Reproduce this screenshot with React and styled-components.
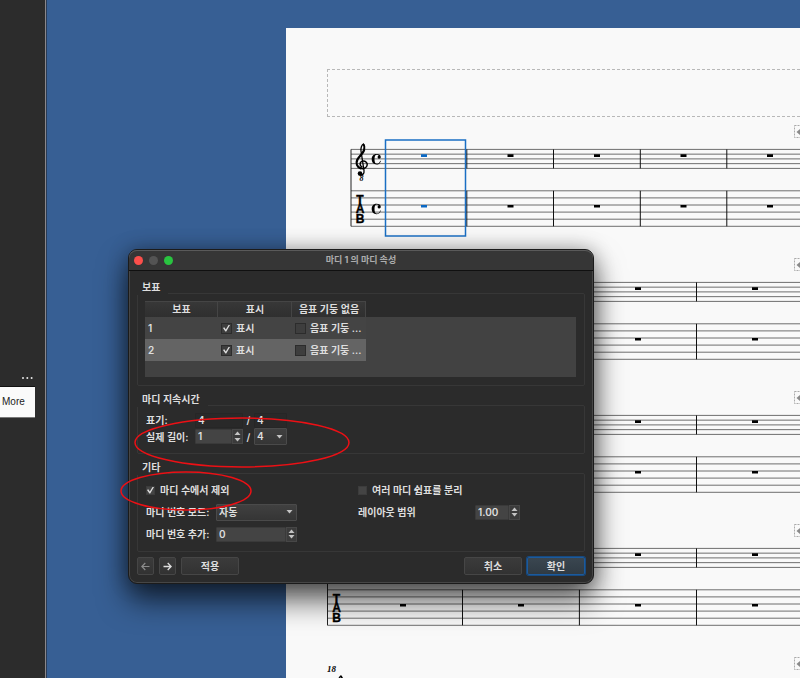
import { useState } from 'react'
import styled, { createGlobalStyle, css } from 'styled-components'

const GlobalStyle = createGlobalStyle`
    *{
        box-sizing: border-box;
    }
    body{
        margin: 0;
        background: #375f94;
        font-family: Inter, "Noto Sans CJK KR", sans-serif;
        font-size: 10px;
        line-height: 16px;
    }
    button, input, select{
        font: inherit;
        color: inherit;
        margin: 0;
    }
`

const Shell = styled.div`
    display: flex;
    height: 100vh;
    overflow: hidden;
`

const Sidebar = styled.aside`
    flex: 0 0 47px;
    padding-top: 370px;
    background: #2c2c2c;
    border-right: 1px solid #2a3c55;
    box-shadow: inset -1px 0 #8b878a;
`

const MoreButton = styled.button`
    position: relative;
    display: block;
    width: 35px;
    height: 16px;
    padding: 0;
    border: 0;
    background: none;
    svg{
        display: block;
        margin-left: 21px;
    }
`

const Tooltip = styled.span`
    position: absolute;
    top: 16px;
    left: 0;
    width: 35px;
    padding: 7px 2px;
    border-top: 1px solid #111;
    border-bottom: 1px solid #777;
    background: #fafafa;
    color: #222;
    font-family: "Liberation Sans", sans-serif;
    text-align: left;
`

const Canvas = styled.main`
    position: relative;
    flex: 1;
    display: flex;
    min-width: 0;
    background: #375f94;
`

const Page = styled.div`
    flex: 1;
    min-width: 0;
    margin: 28px 0 0 239px;
    padding: 41px 0 0 41px;
    background: #f9f9f9;
    overflow: hidden;
`

const TitleFrame = styled.div`
    height: 48px;
    margin-bottom: 7px;
    border: 1px dashed #b8b8b8;
    border-right: 0;
`

const SystemSvg = styled.svg`
    display: block;
    width: 100%;
    height: 133px;
    .tab{
        font: bold 12px "Liberation Sans", sans-serif;
    }
    .number{
        font: italic bold 9px "Liberation Serif", serif;
    }
    .eight{
        font: italic bold 8px "Liberation Serif", serif;
    }
`

const Dialog = styled.div`
    position: absolute;
    top: 249px;
    left: 81px;
    width: 466px;
    border: 1px solid #1b1b1b;
    border-radius: 9px;
    background: #2b2b2b;
    color: #dedede;
    font-weight: 600;
    box-shadow: inset 0 0 0 1px #464646, 0 0 20px rgba(0, 0, 0, .3), 0 16px 30px rgba(0, 0, 0, .65);
`

const TitleBar = styled.header`
    display: grid;
    grid-template-columns: 1fr auto 1fr;
    align-items: center;
    height: 21px;
    padding: 0 5px;
    border-radius: 8px 8px 0 0;
    border-bottom: 1px solid #101010;
    background: #363636;
    box-shadow: inset 0 1px #5a5a5a;
    h1{
        margin: 0;
        font-size: 9px;
        font-weight: 700;
        color: #acacac;
    }
`

const Lights = styled.div`
    display: flex;
    gap: 6px;
`

const Light = styled.button`
    width: 9px;
    height: 9px;
    padding: 0;
    border: 0;
    border-radius: 50%;
    background: ${({$color}) => $color};
`

const Form = styled.form`
    display: flex;
    flex-direction: column;
    gap: 5px;
    padding: 8px;
`

const GroupTitle = styled.h2`
    position: relative;
    width: fit-content;
    margin: 0 0 -2px;
    padding: 0 8px 0 5px;
    background: #2b2b2b;
    font-size: 10px;
    font-weight: 600;
`

const GroupBox = styled.div`
    padding: ${({$pad}) => $pad};
    border: 1px solid #373737;
    border-radius: 2px;
`

const TableView = styled.div`
    height: 76px;
    background: #424242;
`

const StaffTable = styled.table`
    width: 100%;
    table-layout: fixed;
    border-collapse: collapse;
    th, td{
        padding: 0;
        font-weight: 600;
        text-align: left;
        white-space: nowrap;
    }
    th{
        height: 16px;
        text-align: center;
        background: linear-gradient(#383838, #2f2f2f);
        box-shadow: inset 0 1px #454545, inset -1px 0 #454545;
    }
    th:last-child{
        background: #2b2b2b;
        box-shadow: none;
    }
    td{
        height: 22px;
        padding-left: 3px;
    }
`

const StaffRow = styled.tr`
    td:not(:last-child){
        background: ${({$selected}) => $selected ? '#646464' : '#444444'};
    }
`

const CheckLabel = styled.label`
    display: flex;
    align-items: center;
    gap: ${({$flat}) => $flat ? 5 : 4}px;
`

const CheckBox = styled.input`
    appearance: none;
    display: grid;
    place-items: center;
    flex: none;
    width: ${({$flat}) => $flat ? 9 : 11}px;
    height: ${({$flat}) => $flat ? 9 : 11}px;
    border: 1px solid ${({$flat}) => $flat ? '#3c3c3c' : '#2c2c2c'};
    background: ${({$flat}) => $flat ? '#444444' : '#3e3e3e'};
    &:checked::before{
        content: "";
        width: 7px;
        height: 7px;
        background: #dddddd;
        clip-path: polygon(0 50%, 18% 40%, 40% 70%, 84% 0, 100% 8%, 46% 100%, 34% 100%);
    }
`

const DurationGrid = styled.div`
    display: grid;
    grid-template-columns: 49px 48px 11px 33px;
    grid-template-rows: 16px 17px;
    align-items: center;
`

const Slash = styled.span`
    text-align: center;
`

const fieldText = css`
    border: 1px solid #3a3a3a;
    border-radius: 1px;
    outline: none;
    font-size: 10px;
    font-weight: 600;
    line-height: 13px;
`

const FixedInput = styled.input`
    ${fieldText}
    width: 100%;
    height: 15px;
    padding: 0 2px;
    background: #292929;
    border-color: #262626;
`

const SpinBox = styled.div`
    display: flex;
    width: 100%;
    height: 15px;
    input{
        ${fieldText}
        flex: 1;
        min-width: 0;
        padding: 0 2px;
        background: #444444;
    }
`

const SpinButtons = styled.div`
    display: flex;
    flex-direction: column;
    width: 11px;
    background: #3b3b3b;
    border: 1px solid #474747;
    button{
        display: grid;
        place-items: center;
        flex: 1;
        min-height: 0;
        padding: 0;
        border: 0;
        background: none;
    }
    svg{
        display: block;
    }
`

const SelectWrap = styled.div`
    display: grid;
    align-items: center;
    height: 17px;
    select, svg{
        grid-area: 1 / 1;
    }
    select{
        ${fieldText}
        appearance: none;
        width: 100%;
        height: 17px;
        padding: 0 2px;
        border-color: #4a4a4a;
        background: linear-gradient(#404040, #353535);
    }
    svg{
        justify-self: end;
        margin-right: 4px;
        pointer-events: none;
    }
`

const MiscGrid = styled.div`
    display: grid;
    grid-template-columns: 212px 1fr;
    grid-auto-rows: 22px;
    align-items: center;
`

const Field = styled.div`
    display: grid;
    grid-template-columns: ${({$label}) => $label}px ${({$control}) => $control}px;
    align-items: center;
`

const Footer = styled.footer`
    display: flex;
    gap: 5px;
`

const Button = styled.button`
    display: grid;
    place-items: center;
    width: ${({$icon}) => $icon ? 17 : 58}px;
    height: 18px;
    padding: 0;
    border: 1px solid ${({$primary}) => $primary ? '#1c5a9c' : '#464646'};
    border-radius: 2px;
    background: ${({$primary}) => $primary ? 'linear-gradient(#3a4650, #303b44)' : 'linear-gradient(#3b3b3b, #323232)'};
    box-shadow: ${({$primary}) => $primary ? '0 0 0 1px #174a80' : 'none'};
    font-weight: 600;
    line-height: 14px;
    &:disabled{
        color: #8c8c8c;
    }
`

const Spacer = styled.span`
    flex: 1;
`

const Rings = styled.svg`
    position: absolute;
    top: 160px;
    left: -10px;
    width: 240px;
    height: 110px;
    pointer-events: none;
`

const STAFF_TOP = 25.4
const TAB_TOP = 66.8
const firstBars = [{end: 139.8, rest: 97}, {end: 226.5, rest: 183.5}, {end: 313.3, rest: 270}, {end: 399.8, rest: 356.5}, {end: 486.5, rest: 443}]
const otherBars = [{end: 135.5, rest: 76}, {end: 252.4, rest: 194}, {end: 369.5, rest: 311}, {end: 486.5, rest: 428}]
const systems = [
    {start: 24, bars: firstBars, time: true, tab: true, selected: true},
    {start: 0.5, bars: otherBars},
    {start: 0.5, bars: otherBars},
    {start: 0.5, bars: otherBars, tab: true},
    {start: 0.5, bars: otherBars, number: 18}
]

function Clef({x, octave}) {
    return (
        <g transform={`translate(${x} 0)`} fill="none" stroke="#000" strokeLinecap="round">
            <path strokeWidth="1.5" d="M11 43C8.6 42 8.4 38.4 10.8 37.4C14 36.2 16.6 38.4 16.2 41C15.8 44.4 12 45.2 9.4 44.2" />
            <path strokeWidth="2.3" d="M9.4 44.2C6 42.8 4.8 39.4 6.2 36C7.6 32.6 11.8 30 13 26.4" />
            <path strokeWidth="1.3" d="M13 26.4C13.8 24 13.6 20.8 12.4 20C10.4 21 9.6 24.6 10 27L13 46.6C13.4 49.6 11.6 51.2 9.6 51" />
            <path strokeWidth="2" d="M13.2 25.4C13.6 23.4 13.3 21.4 12.5 20.6" />
            <circle cx="9" cy="49.6" r="2.3" fill="#000" stroke="none" />
            {octave && <text className="eight" x="10.5" y="57" textAnchor="middle" fill="#000" stroke="none">8</text>}
        </g>
    )
}

function CommonTime({x, y}) {
    return (
        <path
            transform={`translate(${x} ${y})`}
            d="M4.4 1.6C3.7 4 2.1 5.2 0 5.2C-3 5.2-4.8 2.9-4.8 0C-4.8-3-3-5.2 0-5.2C2.5-5.2 4.3-4 4.3-2.1A1.6 1.6 0 1 1 2.2-3.7C1.8-4.3 1-4.6.3-4.6C-1.4-4.6-2-2.7-2 0C-2 2.7-1.4 4.5.4 4.5C2 4.5 3.2 3.3 3.7 1.4Z"
        />
    )
}

function StaffLines({x, top, count, step}) {
    return Array.from({length: count}, (_, i) => (
        <line key={i} x1={x} x2="100%" y1={top + i * step} y2={top + i * step} stroke="#000" strokeOpacity=".75" strokeWidth=".75" />
    ))
}

function System({start, bars, time, tab, selected, number}) {
    return (
        <SystemSvg aria-hidden="true">
            <StaffLines x={start} top={STAFF_TOP} count={5} step={4.75} />
            <StaffLines x={start} top={TAB_TOP} count={6} step={7.1} />
            <line x1={start} x2={start} y1={STAFF_TOP} y2={TAB_TOP + 35.5} stroke="#222" strokeWidth="1" />
            <Clef x={time ? start : start + 1} octave={time} />
            {tab && ['T', 'A', 'B'].map((letter, i) => (
                <text key={letter} className="tab" x={start + 9} y={79.5 + i * 9.7} textAnchor="middle" stroke="#000" strokeWidth=".4">{letter}</text>
            ))}
            {time && <CommonTime x={start + 25.5} y={35.3} />}
            {time && <CommonTime x={start + 25.5} y={85} />}
            {number && <text className="number" x="0" y="16">{number}</text>}
            {bars.map(({end, rest}, i) => (
                <g key={end}>
                    <path d={`M${end} ${STAFF_TOP}v19M${end} ${TAB_TOP}v35.5`} stroke="#111" strokeWidth="1" />
                    <path d={`M${rest - 3} 30.3h6v2.6h-6zM${rest - 3} 81h6v2.6h-6z`} fill={selected && i === 0 ? '#0a68c4' : '#000'} />
                </g>
            ))}
            {selected && <rect x="58.5" y="16" width="80" height="96" fill="none" stroke="#1a6fc4" strokeWidth="1.5" />}
            <rect x="467.5" y="1.5" width="14" height="12" fill="none" stroke="#aaa" strokeDasharray="2 1" />
            <path d="M469.5 8l4-3.5v2h4v3h-4v2z" fill="#8a8a8a" />
        </SystemSvg>
    )
}

function Arrow({up}) {
    return (
        <svg width="7" height="4" viewBox="0 0 7 4" aria-hidden="true">
            <path d={up ? 'M.5 4L3.5.5L6.5 4z' : 'M.5 0h6L3.5 3.5z'} fill="#c4c4c4" />
        </svg>
    )
}

function Spin({id, label, defaultValue}) {
    return (
        <SpinBox>
            <input id={id} aria-label={label} defaultValue={defaultValue} inputMode="decimal" />
            <SpinButtons>
                <button type="button" aria-label="증가"><Arrow up /></button>
                <button type="button" aria-label="감소"><Arrow /></button>
            </SpinButtons>
        </SpinBox>
    )
}

function Select({id, label, options}) {
    return (
        <SelectWrap>
            <select id={id} aria-label={label}>
                {options.map(option => <option key={option}>{option}</option>)}
            </select>
            <Arrow />
        </SelectWrap>
    )
}

function Check({label, flat, defaultChecked}) {
    return (
        <CheckLabel $flat={flat}>
            <CheckBox type="checkbox" $flat={flat} defaultChecked={defaultChecked} />
            {label}
        </CheckLabel>
    )
}

function MeasureDialog() {

    const [selectedStaff, setSelectedStaff] = useState(2)

    return (
        <Dialog role="dialog" aria-labelledby="dialogTitle">
            <TitleBar>
                <Lights>
                    <Light $color="#fc4f4b" aria-label="닫기" />
                    <Light $color="#545454" aria-label="최소화" />
                    <Light $color="#29c440" aria-label="확대" />
                </Lights>
                <h1 id="dialogTitle">마디 1 의 마디 속성</h1>
            </TitleBar>
            <Form onSubmit={e => e.preventDefault()}>
                <section>
                    <GroupTitle>보표</GroupTitle>
                    <GroupBox $pad="7px 8px 8px 7px">
                        <TableView>
                            <StaffTable>
                                <colgroup>
                                    <col width="73" />
                                    <col width="74" />
                                    <col width="74" />
                                    <col />
                                </colgroup>
                                <thead>
                                    <tr>
                                        <th>보표</th>
                                        <th>표시</th>
                                        <th>음표 기둥 없음</th>
                                        <th></th>
                                    </tr>
                                </thead>
                                <tbody>
                                    {[1, 2].map(staff => (
                                        <StaffRow key={staff} $selected={staff === selectedStaff} onClick={() => setSelectedStaff(staff)}>
                                            <td>{staff}</td>
                                            <td><Check label="표시" defaultChecked /></td>
                                            <td><Check label="음표 기둥 ..." /></td>
                                            <td></td>
                                        </StaffRow>
                                    ))}
                                </tbody>
                            </StaffTable>
                        </TableView>
                    </GroupBox>
                </section>
                <section>
                    <GroupTitle>마디 지속시간</GroupTitle>
                    <GroupBox $pad="6px 8px 8px">
                        <DurationGrid>
                            <label htmlFor="nominal">표기:</label>
                            <FixedInput id="nominal" value="4" readOnly />
                            <Slash>/</Slash>
                            <FixedInput aria-label="표기 분모" value="4" readOnly />
                            <label htmlFor="actual">실제 길이:</label>
                            <Spin id="actual" defaultValue="1" />
                            <Slash>/</Slash>
                            <Select label="실제 길이 분모" options={['4', '8', '16']} />
                        </DurationGrid>
                    </GroupBox>
                </section>
                <section>
                    <GroupTitle>기타</GroupTitle>
                    <GroupBox $pad="5px 8px 6px">
                        <MiscGrid>
                            <Check flat label="마디 수에서 제외" defaultChecked />
                            <Check flat label="여러 마디 쉼표를 분리" />
                            <Field $label={70} $control={81}>
                                <label htmlFor="mode">마디 번호 모드:</label>
                                <Select id="mode" options={['자동', '항상', '숨기기']} />
                            </Field>
                            <Field $label={117} $control={45}>
                                <label htmlFor="stretch">레이아웃 범위</label>
                                <Spin id="stretch" defaultValue="1.00" />
                            </Field>
                            <Field $label={70} $control={81}>
                                <label htmlFor="offset">마디 번호 추가:</label>
                                <Spin id="offset" defaultValue="0" />
                            </Field>
                        </MiscGrid>
                    </GroupBox>
                </section>
                <Footer>
                    <Button type="button" $icon disabled aria-label="이전 마디">
                        <svg width="9" height="9" viewBox="0 0 9 9" fill="none" stroke="currentColor" strokeWidth="1.2"><path d="M8.5 4.5H1M4.3 1L.8 4.5L4.3 8" /></svg>
                    </Button>
                    <Button type="button" $icon aria-label="다음 마디">
                        <svg width="9" height="9" viewBox="0 0 9 9" fill="none" stroke="currentColor" strokeWidth="1.3"><path d="M.5 4.5H8M4.7 1L8.2 4.5L4.7 8" /></svg>
                    </Button>
                    <Button type="button">적용</Button>
                    <Spacer />
                    <Button type="button">취소</Button>
                    <Button type="submit" $primary>확인</Button>
                </Footer>
            </Form>
            <Rings viewBox="0 0 240 110" fill="none" stroke="#ec1015" strokeWidth="1.5" aria-hidden="true">
                <ellipse cx="123" cy="32.5" rx="107" ry="24.5" />
                <ellipse cx="67" cy="81" rx="65" ry="19" />
            </Rings>
        </Dialog>
    )
}

function App() {
    return (
        <Shell>
            <GlobalStyle />
            <Sidebar>
                <MoreButton aria-describedby="moreTip" aria-label="More">
                    <svg width="14" height="16" viewBox="0 0 14 16" fill="#e6e6e6" aria-hidden="true">
                        <circle cx="2" cy="8" r="1" />
                        <circle cx="6.3" cy="8" r="1" />
                        <circle cx="10.6" cy="8" r="1" />
                    </svg>
                    <Tooltip id="moreTip" role="tooltip">More</Tooltip>
                </MoreButton>
            </Sidebar>
            <Canvas>
                <Page>
                    <TitleFrame />
                    {systems.map((system, i) => <System key={i} {...system} />)}
                </Page>
                <MeasureDialog />
            </Canvas>
        </Shell>
    )
}

export default App
